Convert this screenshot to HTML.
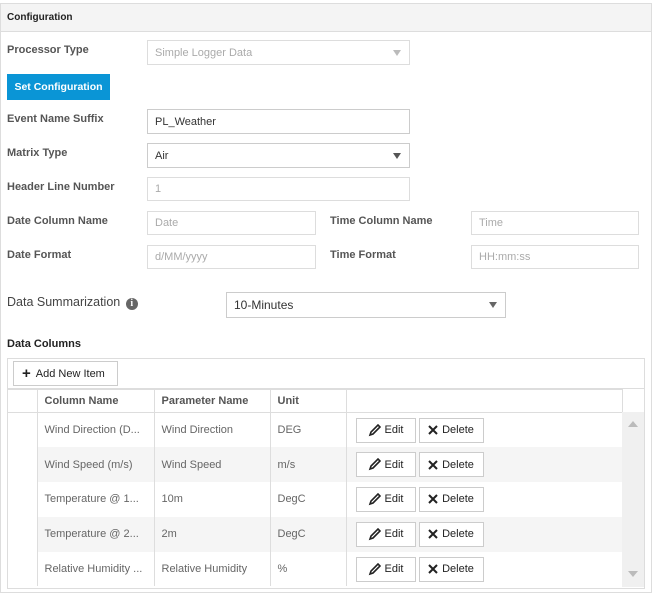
<!DOCTYPE html>
<html><head><style>
*{box-sizing:border-box;margin:0;padding:0}
body{width:655px;height:589px;background:#fff;font-family:"Liberation Sans",Arial,sans-serif;position:relative;overflow:hidden;color:#333}
.a{position:absolute}
.panel{left:0;top:3px;width:652px;height:590px;border:1px solid #ddd}
.hdr{left:1px;top:4px;width:650px;height:28px;background:#f4f4f4;border-bottom:1px solid #ddd;font-size:10px;font-weight:bold;color:#222;padding:8px 0 0 6px}
.lbl{font-size:11px;font-weight:bold;color:#555;left:7px}
.inp{border:1px solid #ddd;font-size:11px;color:#aaa;padding:0 7px;display:flex;align-items:center;background:#fff}
.inp.dk{color:#333;border-color:#ccc}
.arr{position:absolute;right:8px;top:50%;margin-top:-3px;width:0;height:0;border-left:4px solid transparent;border-right:4px solid transparent;border-top:6px solid #888}
.btn{left:7px;top:74px;width:103px;height:26px;background:#0a95d6;color:#fff;font-size:10.5px;font-weight:bold;display:flex;align-items:center;justify-content:center}
.grid{left:7px;top:358px;width:638px;height:231px;border:1px solid #ddd}
.tb{left:13px;top:361px;width:105px;height:25px;border:1px solid #ccc;font-size:11px;color:#222;display:flex;align-items:center;padding-left:8px}
table{position:absolute;left:8px;top:389px;border-collapse:collapse;font-size:11px;width:614px}
td,th{border-left:1px solid #ddd;padding:0 0 0 7px;text-align:left;white-space:nowrap;overflow:hidden}
th{height:23px;color:#555;font-weight:bold;border-bottom:1px solid #ddd;border-top:1px solid #ddd}
td{height:34.8px;color:#666}
tr.g td{background:#f5f5f5}
.b{display:inline-flex;align-items:center;justify-content:center;height:25px;border:1px solid #ccc;background:#fff;font-size:11px;color:#222;margin-right:3px;vertical-align:middle}
.e{width:60px}.d{width:65px}
.b svg{margin-right:4px}
.sb{left:622px;top:412px;width:22px;height:175px;background:#f0f0f0}
</style></head><body>
<div class="a panel"></div>
<div class="a hdr">Configuration</div>

<div class="a lbl" style="top:44px">Processor Type</div>
<div class="a inp" style="left:147px;top:40px;width:263px;height:25px">Simple Logger Data<span class="arr" style="border-top-color:#bbb"></span></div>
<div class="a btn">Set Configuration</div>
<div class="a lbl" style="top:113px">Event Name Suffix</div>
<div class="a inp dk" style="left:147px;top:109px;width:263px;height:25px">PL_Weather</div>
<div class="a lbl" style="top:147px">Matrix Type</div>
<div class="a inp dk" style="left:147px;top:143px;width:263px;height:25px">Air<span class="arr" style="border-top-color:#555"></span></div>
<div class="a lbl" style="top:181px">Header Line Number</div>
<div class="a inp" style="left:147px;top:177px;width:263px;height:24px">1</div>

<div class="a lbl" style="top:215px">Date Column Name</div>
<div class="a inp" style="left:147px;top:211px;width:169px;height:24px">Date</div>
<div class="a lbl" style="top:215px;left:330px">Time Column Name</div>
<div class="a inp" style="left:471px;top:211px;width:168px;height:24px">Time</div>
<div class="a lbl" style="top:249px">Date Format</div>
<div class="a inp" style="left:147px;top:245px;width:169px;height:24px">d/MM/yyyy</div>
<div class="a lbl" style="top:249px;left:330px">Time Format</div>
<div class="a inp" style="left:471px;top:245px;width:168px;height:24px">HH:mm:ss</div>

<div class="a" style="left:7px;top:295px;font-size:12.5px;color:#444">Data Summarization <span style="display:inline-block;width:12px;height:12px;border-radius:50%;background:#666;color:#fff;font-size:10px;font-weight:bold;text-align:center;line-height:12px;font-family:'Liberation Serif',serif;vertical-align:0px;margin-left:2px">i</span></div>
<div class="a inp dk" style="left:226px;top:292px;width:280px;height:26px;font-size:12px">10-Minutes<span class="arr" style="border-top-color:#666"></span></div>

<div class="a" style="left:7px;top:338px;font-size:11px;font-weight:bold;color:#222">Data Columns</div>
<div class="a grid"></div>
<div class="a tb"><span style="font-size:15px;font-weight:bold;margin-right:5px">+</span>Add New Item</div>
<div class="a" style="left:8px;top:388px;width:636px;border-top:1px solid #ddd"></div>
<table>
<tr><th style="width:29px;border-left:none"></th><th style="width:117px">Column Name</th><th style="width:116px">Parameter Name</th><th style="width:76px">Unit</th><th></th></tr>
<tr><td style="border-left:none"></td><td>Wind Direction (D...</td><td>Wind Direction</td><td>DEG</td><td style="padding-left:9px"><span class="b e"><svg width="13" height="13" viewBox="0 0 13 13"><path d="M2 11 L3 8 L10 1 L12 3 L5 10 Z" fill="none" stroke="#222" stroke-width="1.6"/></svg>Edit</span><span class="b d"><svg width="10" height="10" viewBox="0 0 10 10"><path d="M1 1L9 9M9 1L1 9" stroke="#222" stroke-width="2"/></svg>Delete</span></td></tr>
<tr class="g"><td style="border-left:none;background:#fff"></td><td>Wind Speed (m/s)</td><td>Wind Speed</td><td>m/s</td><td style="padding-left:9px"><span class="b e"><svg width="13" height="13" viewBox="0 0 13 13"><path d="M2 11 L3 8 L10 1 L12 3 L5 10 Z" fill="none" stroke="#222" stroke-width="1.6"/></svg>Edit</span><span class="b d"><svg width="10" height="10" viewBox="0 0 10 10"><path d="M1 1L9 9M9 1L1 9" stroke="#222" stroke-width="2"/></svg>Delete</span></td></tr>
<tr><td style="border-left:none"></td><td>Temperature @ 1...</td><td>10m</td><td>DegC</td><td style="padding-left:9px"><span class="b e"><svg width="13" height="13" viewBox="0 0 13 13"><path d="M2 11 L3 8 L10 1 L12 3 L5 10 Z" fill="none" stroke="#222" stroke-width="1.6"/></svg>Edit</span><span class="b d"><svg width="10" height="10" viewBox="0 0 10 10"><path d="M1 1L9 9M9 1L1 9" stroke="#222" stroke-width="2"/></svg>Delete</span></td></tr>
<tr class="g"><td style="border-left:none;background:#fff"></td><td>Temperature @ 2...</td><td>2m</td><td>DegC</td><td style="padding-left:9px"><span class="b e"><svg width="13" height="13" viewBox="0 0 13 13"><path d="M2 11 L3 8 L10 1 L12 3 L5 10 Z" fill="none" stroke="#222" stroke-width="1.6"/></svg>Edit</span><span class="b d"><svg width="10" height="10" viewBox="0 0 10 10"><path d="M1 1L9 9M9 1L1 9" stroke="#222" stroke-width="2"/></svg>Delete</span></td></tr>
<tr><td style="border-left:none"></td><td>Relative Humidity ...</td><td>Relative Humidity</td><td>%</td><td style="padding-left:9px"><span class="b e"><svg width="13" height="13" viewBox="0 0 13 13"><path d="M2 11 L3 8 L10 1 L12 3 L5 10 Z" fill="none" stroke="#222" stroke-width="1.6"/></svg>Edit</span><span class="b d"><svg width="10" height="10" viewBox="0 0 10 10"><path d="M1 1L9 9M9 1L1 9" stroke="#222" stroke-width="2"/></svg>Delete</span></td></tr>
</table>
<div class="a" style="left:622px;top:389px;width:1px;height:23px;background:#ddd"></div>
<div class="a sb"></div>
<div class="a" style="left:628px;top:421px;border-left:5px solid transparent;border-right:5px solid transparent;border-bottom:6px solid #bbb"></div>
<div class="a" style="left:628px;top:571px;border-left:5px solid transparent;border-right:5px solid transparent;border-top:6px solid #bbb"></div>
</body></html>
